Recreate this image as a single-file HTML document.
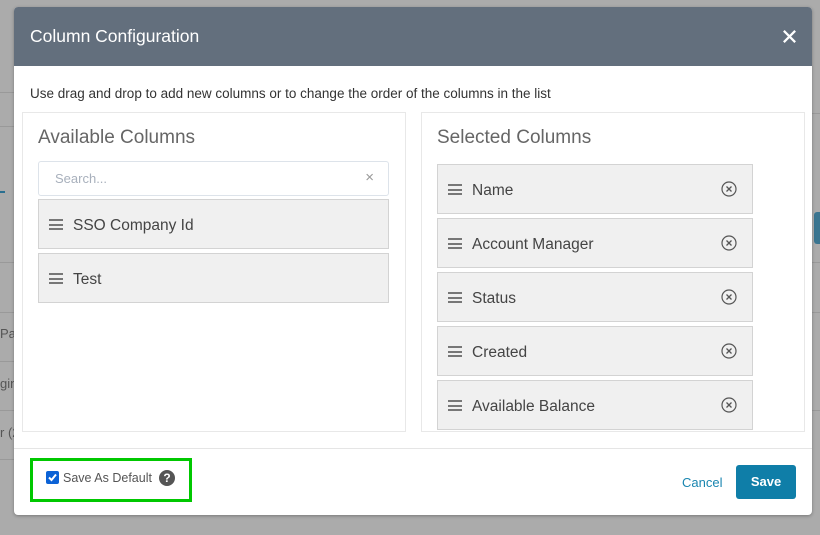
<!DOCTYPE html>
<html><head><meta charset="utf-8"><style>
*{box-sizing:border-box;margin:0;padding:0}
body{width:820px;height:535px;background:#ababab;font-family:"Liberation Sans",sans-serif;position:relative;overflow:hidden}
.bgl{position:absolute;left:0;width:14px;height:1px;background:#999}
.bgr{position:absolute;right:0;width:8px;height:1px;background:#999}
.modal{position:absolute;left:14px;top:7px;width:798px;height:508px;background:#fff;border-radius:4px;overflow:hidden;box-shadow:0 1px 3px rgba(0,0,0,.3)}
.hdr{height:59px;background:#636f7d;color:#fff;font-size:17.5px;padding:19px 0 0 16px;position:relative}
.close{position:absolute;right:14px;top:21px;width:17px;height:17px}
.desc{position:absolute;left:16px;top:79px;font-size:13.5px;color:#333}
.panel{position:absolute;top:105px;width:384px;height:320px;border:1px solid #e8e8e8}
.ptitle{position:absolute;left:15px;top:14px;font-size:19px;color:#666;font-weight:300}
.search{position:absolute;left:15px;top:48px;width:351px;height:35px;border:1px solid #dde3ea;border-radius:3px;font-size:13px;color:#a8b0bc;padding:9px 0 0 16px}
.search span{position:absolute;right:14px;top:7px;color:#999;font-size:15px}
.item{position:absolute;height:50px;background:#f0f0f0;border:1px solid #d3d3d3;font-size:15.5px;color:#444}
.item .h{position:absolute;left:10px;top:19px;width:14px;height:11px;border-top:2px solid #777;border-bottom:2px solid #777}
.item .h:after{content:"";position:absolute;left:0;top:2.5px;width:14px;height:2px;background:#777}
.item .t{position:absolute;left:34px;top:17px}
.item svg{position:absolute;right:15px;top:16px}
.foot{position:absolute;left:0;top:441px;width:100%;height:1px;background:#e5e5e5}
.green{position:absolute;left:16px;top:451px;width:162px;height:44px;border:3px solid #00c800}
.cb{position:absolute;left:13px;top:10px;width:13px;height:13px;background:#0b62d6;border-radius:2px}
.lbl{position:absolute;left:30px;top:10px;font-size:12.5px;color:#555}
.q{position:absolute;left:126px;top:9px;width:16px;height:16px;border-radius:50%;background:#555;color:#fff;font-size:12px;font-weight:bold;text-align:center;line-height:16px}
.cancel{position:absolute;left:668px;top:468px;font-size:13px;color:#1a86b0}
.save{position:absolute;left:722px;top:458px;width:60px;height:34px;background:#0f7ea8;border-radius:3px;color:#fff;font-size:13px;font-weight:600;text-align:center;line-height:34px}
</style></head><body>
<div class="bgl" style="top:92px"></div><div class="bgl" style="top:126px"></div><div class="bgl" style="top:262px"></div><div class="bgl" style="top:312px"></div><div class="bgl" style="top:361px"></div><div class="bgl" style="top:410px"></div><div class="bgl" style="top:459px"></div>
<div style="position:absolute;left:0;top:191px;width:5px;height:2px;background:#2a6f90"></div>
<div style="position:absolute;left:0;top:326px;font-size:13px;color:#555">Pa</div>
<div style="position:absolute;left:0;top:376px;font-size:13px;color:#555">gin</div>
<div style="position:absolute;left:0;top:425px;font-size:13px;color:#555">r (2</div>
<div style="position:absolute;right:0;top:212px;width:6px;height:32px;background:#3a7590;border-radius:3px 0 0 3px"></div>
<div class="bgr" style="top:113px"></div><div class="bgr" style="top:262px"></div><div class="bgr" style="top:312px"></div><div class="bgr" style="top:410px"></div>
<div class="modal">
<div class="hdr">Column Configuration
<svg class="close" viewBox="0 0 18 18"><path d="M3 3L15 15M15 3L3 15" stroke="#fff" stroke-width="2.4"/></svg></div>
<div class="desc">Use drag and drop to add new columns or to change the order of the columns in the list</div>
<div class="panel" style="left:8px">
<div class="ptitle">Available Columns</div>
<div class="search">Search...<span>×</span></div>
<div class="item" style="left:15px;top:86px;width:351px"><div class="h"></div><div class="t">SSO Company Id</div></div>
<div class="item" style="left:15px;top:140px;width:351px"><div class="h"></div><div class="t">Test</div></div>
</div>
<div class="panel" style="left:407px">
<div class="ptitle">Selected Columns</div>
<div class="item" style="left:15px;top:51px;width:316px"><div class="h"></div><div class="t">Name</div><svg width="16" height="16" viewBox="0 0 16 16"><circle cx="8" cy="8" r="7" fill="none" stroke="#555" stroke-width="1.2"/><path d="M5.5 5.5L10.5 10.5M10.5 5.5L5.5 10.5" stroke="#555" stroke-width="1.3"/></svg></div>
<div class="item" style="left:15px;top:105px;width:316px"><div class="h"></div><div class="t">Account Manager</div><svg width="16" height="16" viewBox="0 0 16 16"><circle cx="8" cy="8" r="7" fill="none" stroke="#555" stroke-width="1.2"/><path d="M5.5 5.5L10.5 10.5M10.5 5.5L5.5 10.5" stroke="#555" stroke-width="1.3"/></svg></div>
<div class="item" style="left:15px;top:159px;width:316px"><div class="h"></div><div class="t">Status</div><svg width="16" height="16" viewBox="0 0 16 16"><circle cx="8" cy="8" r="7" fill="none" stroke="#555" stroke-width="1.2"/><path d="M5.5 5.5L10.5 10.5M10.5 5.5L5.5 10.5" stroke="#555" stroke-width="1.3"/></svg></div>
<div class="item" style="left:15px;top:213px;width:316px"><div class="h"></div><div class="t">Created</div><svg width="16" height="16" viewBox="0 0 16 16"><circle cx="8" cy="8" r="7" fill="none" stroke="#555" stroke-width="1.2"/><path d="M5.5 5.5L10.5 10.5M10.5 5.5L5.5 10.5" stroke="#555" stroke-width="1.3"/></svg></div>
<div class="item" style="left:15px;top:267px;width:316px"><div class="h"></div><div class="t">Available Balance</div><svg width="16" height="16" viewBox="0 0 16 16"><circle cx="8" cy="8" r="7" fill="none" stroke="#555" stroke-width="1.2"/><path d="M5.5 5.5L10.5 10.5M10.5 5.5L5.5 10.5" stroke="#555" stroke-width="1.3"/></svg></div>
</div>
<div class="foot"></div>
<div class="green"><div class="cb"><svg width="13" height="13" viewBox="0 0 13 13"><path d="M3 6.5L5.5 9L10 3.5" stroke="#fff" stroke-width="2" fill="none"/></svg></div><div class="lbl">Save As Default</div><div class="q">?</div></div>
<div class="cancel">Cancel</div>
<div class="save">Save</div>
</div>
</body></html>
